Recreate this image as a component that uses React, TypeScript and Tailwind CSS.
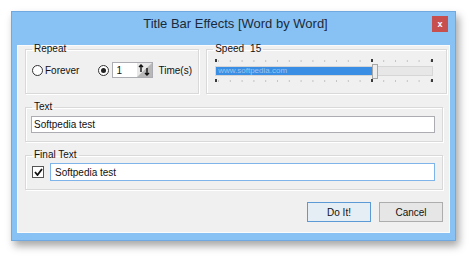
import React from 'react'

const ui = "font-['Liberation_Sans',Arial,sans-serif]"

function Ticks({ marks }: { marks: number[] }) {
  const dots = Array.from({ length: 19 }, (_, i) => 3 + i * 11.8)
  return (
    <svg width="218" height="4" viewBox="0 0 218 4" className="block">
      {dots.map((x) => (
        <rect key={x} x={x} y="1" width="1" height="2" fill="#c4c4c4" />
      ))}
      {marks.map((x) => (
        <rect key={'m' + x} x={x} y="0" width="2" height="3" fill="#3a3a3a" />
      ))}
    </svg>
  )
}

function Radio({ checked }: { checked?: boolean }) {
  return (
    <span className="flex h-[11px] w-[11px] items-center justify-center rounded-full border border-[#333] bg-white">
      {checked && <span className="h-[5px] w-[5px] rounded-full bg-[#222]" />}
    </span>
  )
}

function GroupLegend({ children }: { children: React.ReactNode }) {
  return <legend className="ml-[6px] px-[2px] text-[10px] leading-[10px] text-[#111]">{children}</legend>
}

const groupBox = 'border border-[#d9d9d9] shadow-[inset_1px_1px_0_#fff,1px_1px_0_#fff]'

export default function App() {
  return (
    <div className={`h-[259px] w-[474px] bg-white pl-[11px] pt-[11px] ${ui}`}>
      <div className="flex h-[230px] w-[445px] flex-col border border-[#6fa9e0] bg-[#88c2f4] px-[5px] pb-[7px] shadow-[3px_5px_8px_rgba(0,0,0,0.35)]">
        <div className="grid h-[33px] grid-cols-[1fr_auto_1fr] items-start pt-[4px]">
          <div />
          <div className="pl-[4px] text-[13px] leading-[16px] text-[#1b2a3a]">Title Bar Effects [Word by Word]</div>
          <div className="flex justify-end pr-[2px]">
            <div className="flex h-[16px] w-[16px] items-center justify-center bg-[#c7504f] text-[9px] font-bold leading-none text-white">x</div>
          </div>
        </div>

        <div className="flex flex-1 flex-col border border-[#fbfbfb] bg-[#f0f0f0] pl-[7px] pr-[2px] pb-[8px]">
          <div className="-mt-[2px] flex gap-[7px]">
            <fieldset className={`h-[50px] w-[175px] ${groupBox}`}>
              <GroupLegend>Repeat</GroupLegend>
              <div className="mt-[8px] flex items-center pl-[6px] text-[10px] text-[#111]">
                <Radio />
                <span className="ml-[2px]">Forever</span>
                <span className="ml-[19px]"><Radio checked /></span>
                <div className="ml-[3px] flex h-[16px] w-[41px] items-center border border-[#abadb3] bg-white">
                  <span className="flex-1 pl-[3px]">1</span>
                  <svg width="15" height="14" viewBox="0 0 15 14" className="block">
                    <rect width="15" height="14" fill="#e8e8e8" />
                    <polygon points="15,0 15,14 0,14" fill="#b8b8b8" />
                    <path d="M4 9V2M2 4l2-2 2 2" stroke="#111" strokeWidth="1.4" fill="none" />
                    <path d="M10 5v7M8 10l2 2 2-2" stroke="#111" strokeWidth="1.4" fill="none" />
                  </svg>
                </div>
                <span className="ml-[5px]">Time(s)</span>
              </div>
            </fieldset>
            <fieldset className={`h-[50px] w-[242px] ${groupBox}`}>
              <GroupLegend>
                Speed<span className="ml-[6px]">15</span>
              </GroupLegend>
              <div className="mt-[5px] pl-[8px]">
                <Ticks marks={[0, 156, 216]} />
                <div className="mt-[3px] flex h-[10px] w-[218px] items-center border border-[#d6d6d6] bg-[#e7e7e7]">
                  <div className="flex h-[8px] w-[156px] items-center overflow-hidden bg-[#3a8ee4] pl-[2px] text-[8px] leading-none text-[#9cc6f0]">
                    www.softpedia.com
                  </div>
                  <div className="-my-[3px] h-[15px] w-[6px] shrink-0 border border-[#a8a8a8] bg-[#ececec]" />
                </div>
                <div className="mt-[3px]">
                  <Ticks marks={[0, 156, 216]} />
                </div>
              </div>
            </fieldset>
          </div>

          <fieldset className={`mt-[8px] w-[418px] pb-[8px] ${groupBox}`}>
            <GroupLegend>Text</GroupLegend>
            <div className="ml-[5px] mt-[4px] flex h-[17px] w-[404px] items-center border border-[#abadb3] bg-white pl-[2px] text-[10px] text-[#111]">
              Softpedia test
            </div>
          </fieldset>

          <fieldset className={`mt-[8px] w-[418px] pb-[8px] ${groupBox}`}>
            <GroupLegend>Final Text</GroupLegend>
            <div className="mt-[3px] flex items-center pl-[6px]">
              <span className="flex h-[12px] w-[12px] items-center justify-center border border-[#555] bg-white">
                <svg width="9" height="8" viewBox="0 0 9 8" className="block">
                  <path d="M1 4l2.5 3L8 1" stroke="#111" strokeWidth="1.8" fill="none" />
                </svg>
              </span>
              <div className="ml-[6px] flex h-[18px] w-[385px] items-center border border-[#7eb4ea] bg-white pl-[4px] text-[10px] text-[#111]">
                Softpedia test
              </div>
            </div>
          </fieldset>

          <div className="mt-[12px] flex justify-end gap-[8px] pr-[4px] text-[10px] text-[#111]">
            <div className="flex h-[20px] w-[64px] items-center justify-center border border-[#5c9ad6] bg-[#e5edf5]">Do It!</div>
            <div className="flex h-[20px] w-[64px] items-center justify-center border border-[#adadad] bg-[#e6e6e6]">Cancel</div>
          </div>
        </div>
      </div>
    </div>
  )
}
